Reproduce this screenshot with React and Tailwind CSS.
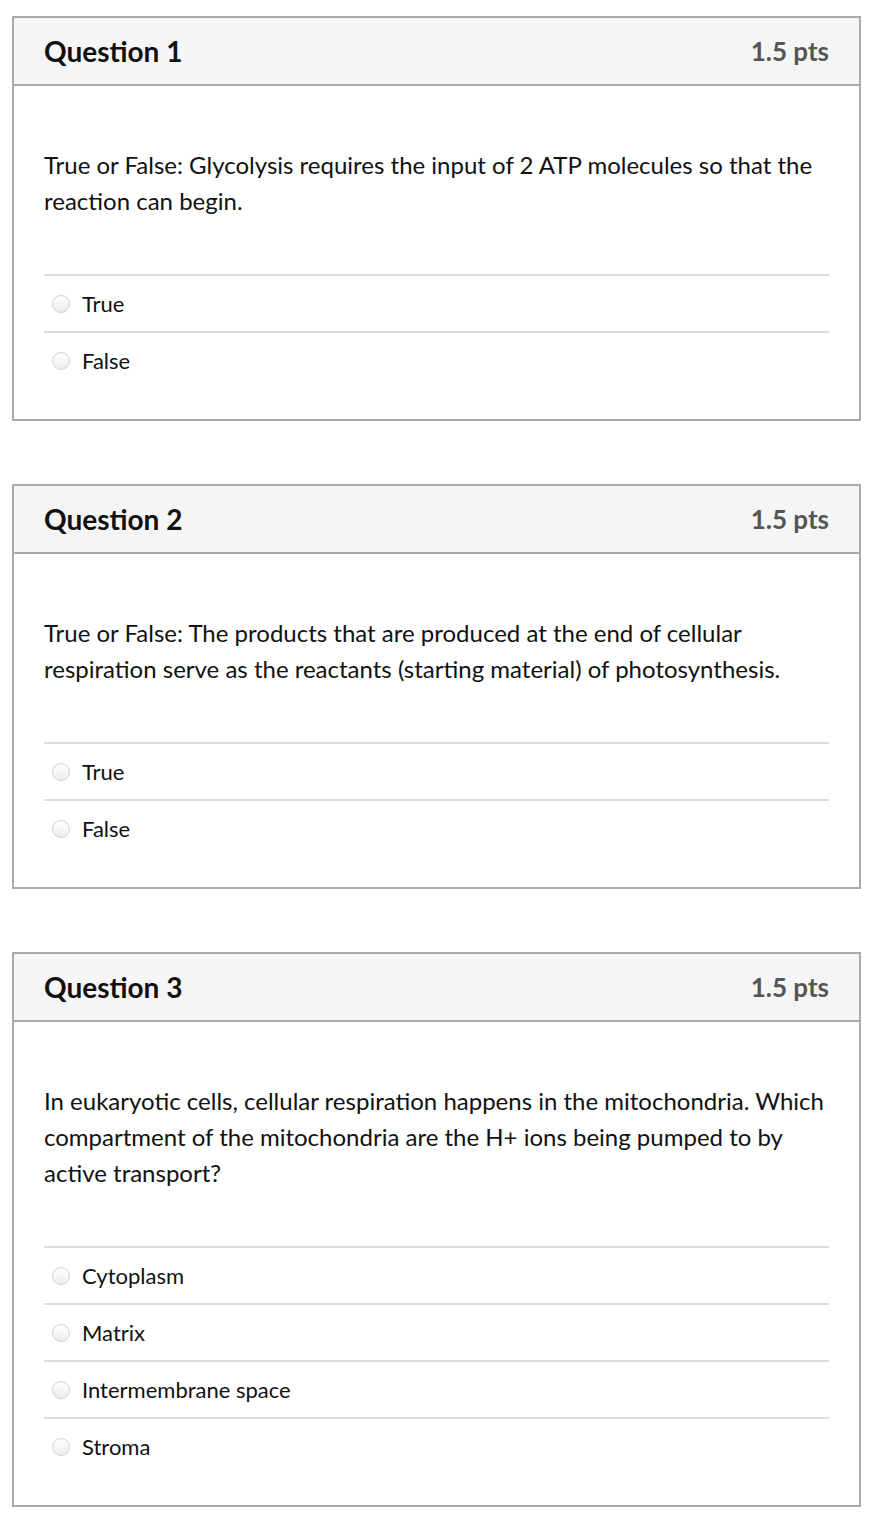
const questions = [
  {
    title: "Question 1",
    text: "True or False: Glycolysis requires the input of 2 ATP molecules so that the reaction can begin.",
    options: ["True", "False"],
  },
  {
    title: "Question 2",
    text: "True or False: The products that are produced at the end of cellular respiration serve as the reactants (starting material) of photosynthesis.",
    options: ["True", "False"],
  },
  {
    title: "Question 3",
    text: "In eukaryotic cells, cellular respiration happens in the mitochondria. Which compartment of the mitochondria are the H+ ions being pumped to by active transport?",
    options: ["Cytoplasm", "Matrix", "Intermembrane space", "Stroma"],
  },
];

function Question({ q }) {
  return (
    <div className="w-[849px] border-2 border-[#aaaaaa] bg-white mb-[63px]">
      <div className="h-[68px] bg-[#f5f5f5] border-b-2 border-[#aaaaaa] px-[30px] flex items-center justify-between">
        <h2 className="text-[28px] font-bold text-[#111]">{q.title}</h2>
        <span className="text-[26px] font-bold text-[#555]">1.5 pts</span>
      </div>
      <div className="px-[30px] pt-[61px] pb-[31px]">
        <p className="w-[792px] text-[24px] leading-[36px] text-[#111]">{q.text}</p>
        <div className="mt-[55px]">
          {q.options.map(opt => (
            <label
              key={opt}
              className="h-[57px] border-t-2 border-[#dcdcdc] flex items-center pl-[8px] gap-[12px]"
            >
              <span className="w-[18px] h-[18px] rounded-full border border-[#d0d0d0] bg-gradient-to-b from-white to-[#ececec] shrink-0" />
              <span className="text-[22px] text-[#111]">{opt}</span>
            </label>
          ))}
        </div>
      </div>
    </div>
  );
}

export default function App() {
  return (
    <div
      className="min-h-screen bg-white pt-[16px] pl-[12px]"
      style={{ fontFamily: "Lato, 'Open Sans', sans-serif" }}
    >
      {questions.map(q => (
        <Question key={q.title} q={q} />
      ))}
    </div>
  );
}
